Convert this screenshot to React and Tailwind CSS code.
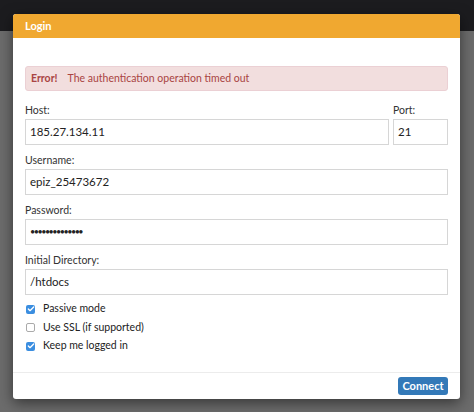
import { Check } from "lucide-react";

const Field = ({ label, value, className = "" }) => (
  <div className={`flex flex-col ${className}`}>
    <label className="h-[16px] leading-[16px] text-[10.5px] text-[#333]">{label}</label>
    <div className="mt-[1px] h-[26px] border border-[#d6d6d6] bg-white px-[4px] flex items-center text-[11.5px] text-[#222]">
      {value}
    </div>
  </div>
);

const Checkbox = ({ checked, label }) => (
  <div className="flex items-center h-[18.5px]">
    <div
      className={`w-[9px] h-[9px] ml-[1px] rounded-[2px] flex items-center justify-center ${
        checked ? "bg-[#3b8ee0]" : "bg-white border border-[#aaa]"
      }`}
    >
      {checked && <Check className="w-[8px] h-[8px] text-white" strokeWidth={4} />}
    </div>
    <span className="ml-[8px] text-[10.5px] text-[#222]">{label}</span>
  </div>
);

export default function App() {
  return (
    <div
      className="relative w-[474px] h-[412px] overflow-hidden bg-[#6c6c6c]"
      style={{ fontFamily: 'Lato, sans-serif' }}
    >
      <div className="h-[31px] bg-[#1c1c1f]" />
      <div className="absolute left-[13px] top-[14px] w-[447px] h-[385px] bg-white rounded-[3px] shadow-[0_4px_14px_rgba(0,0,0,0.5)] overflow-hidden flex flex-col">
        {/* Header */}
        <div className="h-[24px] bg-[#f0a830] flex items-center px-[12px]">
          <span className="text-[11px] font-bold text-white">Login</span>
        </div>

        {/* Body */}
        <div className="flex-1 px-[12px] pt-[28px]">
          <div className="h-[25px] bg-[#f2dede] border border-[#ebd0d4] rounded-[3px] flex items-center px-[5px] text-[10.5px] text-[#a94442]">
            <span className="font-bold">Error!</span>
            <span className="ml-[10px]">The authentication operation timed out</span>
          </div>

          <div className="mt-[11px] flex gap-[4px]">
            <Field label="Host:" value="185.27.134.11" className="flex-1" />
            <Field label="Port:" value="21" className="w-[55px]" />
          </div>
          <Field label="Username:" value="epiz_25473672" className="mt-[7px]" />
          <Field
            label="Password:"
            value={<span className="tracking-[-1.5px] text-[9px]">••••••••••••••</span>}
            className="mt-[7px]"
          />
          <Field label="Initial Directory:" value="/htdocs" className="mt-[7px]" />

          <div className="mt-[5px] flex flex-col">
            <Checkbox checked label="Passive mode" />
            <Checkbox label="Use SSL (if supported)" />
            <Checkbox checked label="Keep me logged in" />
          </div>
        </div>

        {/* Footer */}
        <div className="h-[27px] border-t border-[#ececec] flex items-center justify-end px-[12px]">
          <button className="h-[18px] w-[50px] rounded-[3px] bg-[#3379b8] text-white text-[11px] font-bold flex items-center justify-center">
            Connect
          </button>
        </div>
      </div>
    </div>
  );
}
